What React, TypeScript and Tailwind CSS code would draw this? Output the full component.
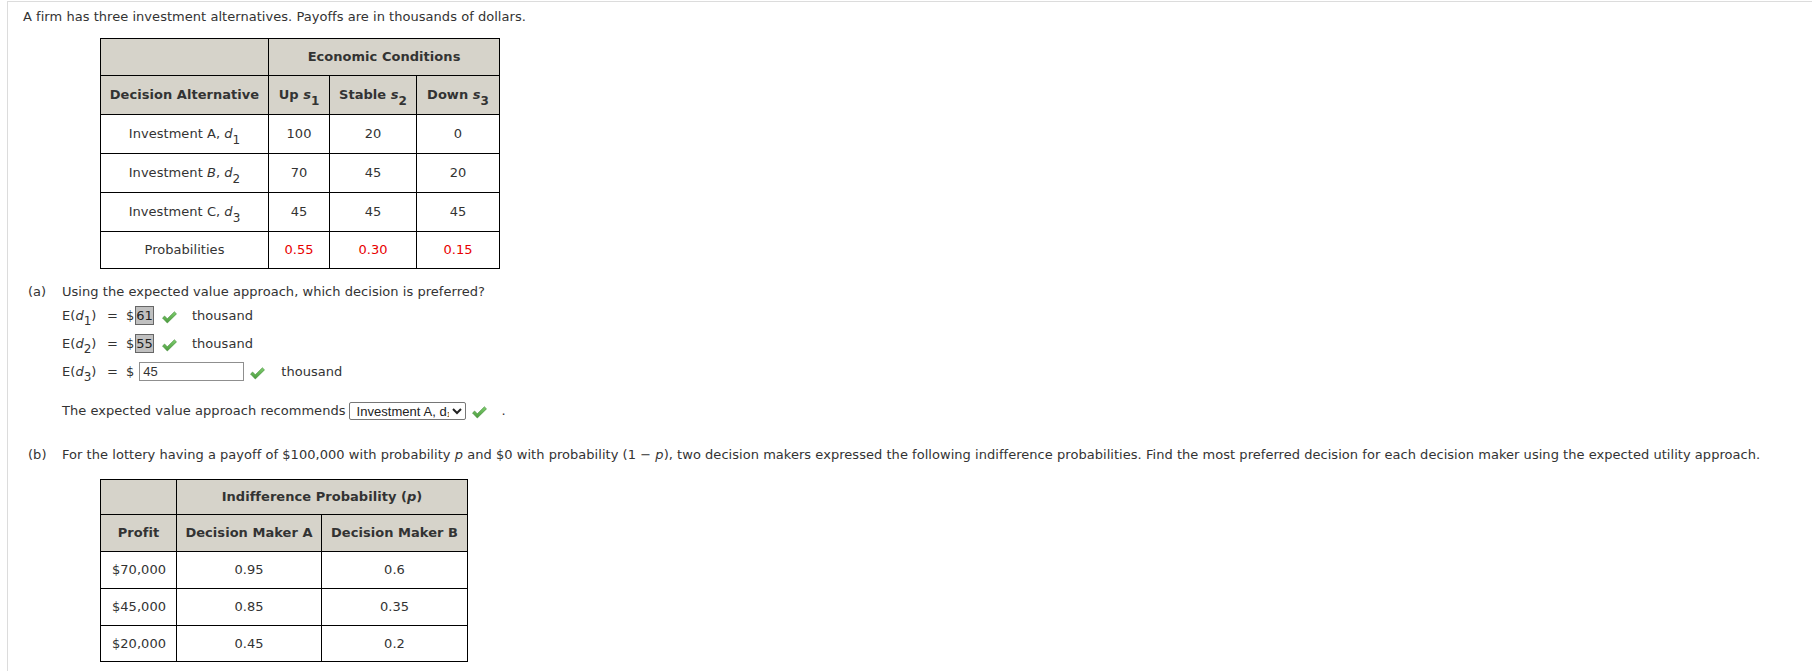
import React from "react";

const Check = ({ className = "" }: { className?: string }) => (
  <svg width="15" height="13" viewBox="0 0 15 13" className={className}>
    <defs>
      <linearGradient id="cg" x1="0" y1="0" x2="0" y2="1">
        <stop offset="0" stopColor="#7fcf6f" />
        <stop offset="1" stopColor="#4a9a3c" />
      </linearGradient>
    </defs>
    <polygon
      points="0.5,7 2.6,5 5.3,7.8 12.4,0.8 14.5,2.9 5.3,12"
      fill="url(#cg)"
      stroke="#3f8a35"
      strokeWidth="0.6"
      strokeLinejoin="round"
    />
  </svg>
);

const S = ({ n, italic = true }: { n: string; italic?: boolean }) => (
  <>
    <span className={italic ? "italic" : ""}>{n[0]}</span>
    <sub className="text-[12px] bottom-[-0.45em]">{n.slice(1)}</sub>
  </>
);

const hd = "bg-[#d6d3ca] border border-black font-bold text-center";
const td = "border border-black text-center";

export default function App() {
  return (
    <div className="min-h-[671px] bg-white font-['DejaVu_Sans',Verdana,sans-serif] text-[13px] tracking-[0.04px] text-[#333]">
      <div className="ml-[7px] mt-px border-l border-t border-[#dcdcdc] pl-[15px] pt-[7px] pb-[10px]">
        <div className="h-[16px] leading-[16px]">
          A firm has three investment alternatives. Payoffs are in thousands of dollars.
        </div>

        <table className="ml-[77px] mt-[13px] border-collapse table-fixed w-[399px]">
          <colgroup>
            <col className="w-[168px]" />
            <col className="w-[61px]" />
            <col className="w-[87px]" />
            <col className="w-[83px]" />
          </colgroup>
          <tbody>
            <tr className="h-[37px]">
              <td className={hd}></td>
              <td className={hd} colSpan={3}>
                Economic Conditions
              </td>
            </tr>
            <tr className="h-[39px]">
              <td className={hd}>Decision Alternative</td>
              <td className={hd}>
                Up <S n="s1" />
              </td>
              <td className={hd}>
                Stable <S n="s2" />
              </td>
              <td className={hd}>
                Down <S n="s3" />
              </td>
            </tr>
            <tr className="h-[39px]">
              <td className={td}>
                Investment A, <S n="d1" />
              </td>
              <td className={td}>100</td>
              <td className={td}>20</td>
              <td className={td}>0</td>
            </tr>
            <tr className="h-[39px]">
              <td className={td}>
                Investment <span className="italic">B</span>, <S n="d2" />
              </td>
              <td className={td}>70</td>
              <td className={td}>45</td>
              <td className={td}>20</td>
            </tr>
            <tr className="h-[39px]">
              <td className={td}>
                Investment C, <S n="d3" />
              </td>
              <td className={td}>45</td>
              <td className={td}>45</td>
              <td className={td}>45</td>
            </tr>
            <tr className="h-[37px]">
              <td className={td}>Probabilities</td>
              <td className={td + " text-[#e80000]"}>0.55</td>
              <td className={td + " text-[#e80000]"}>0.30</td>
              <td className={td + " text-[#e80000]"}>0.15</td>
            </tr>
          </tbody>
        </table>

        {/* Part (a) */}
        <div className="mt-[15px] flex pl-[5px]">
          <div className="w-[34px] h-[16px] leading-[16px]">(a)</div>
          <div className="flex flex-col">
            <div className="h-[16px] leading-[16px]">
              Using the expected value approach, which decision is preferred?
            </div>

            <div className="mt-[6px] flex h-[19px] items-center">
              <span className="w-[45px]">
                E(<S n="d1" />)
              </span>
              <span>=</span>
              <span className="ml-[8px]">$</span>
              <span className="ml-px inline-block h-[19px] border border-[#666] bg-[#c0c0c0] leading-[17px] text-[#222]">
                61
              </span>
              <Check className="ml-[8px] mt-[3px]" />
              <span className="ml-[15px]">thousand</span>
            </div>

            <div className="mt-[9px] flex h-[19px] items-center">
              <span className="w-[45px]">
                E(<S n="d2" />)
              </span>
              <span>=</span>
              <span className="ml-[8px]">$</span>
              <span className="ml-px inline-block h-[19px] border border-[#666] bg-[#c0c0c0] leading-[17px] text-[#222]">
                55
              </span>
              <Check className="ml-[8px] mt-[3px]" />
              <span className="ml-[15px]">thousand</span>
            </div>

            <div className="mt-[9px] flex h-[19px] items-center">
              <span className="w-[45px]">
                E(<S n="d3" />)
              </span>
              <span>=</span>
              <span className="ml-[8px]">$</span>
              <input
                readOnly
                defaultValue="45"
                className="ml-[5px] h-[19px] w-[105px] border border-[#8f8f8f] px-[3px] font-['Liberation_Sans',Arial,sans-serif] text-[13px] text-[#333] outline-none"
              />
              <Check className="ml-[6px] mt-[3px]" />
              <span className="ml-[16px]">thousand</span>
            </div>

            <div className="mt-[21px] flex h-[18px] items-center">
              <span>The expected value approach recommends</span>
              <select
                defaultValue="a"
                className="ml-[3px] h-[18px] w-[117px] rounded-[2px] border border-[#767676] bg-white pl-[3px] font-['Liberation_Sans',Arial,sans-serif] text-[13px] text-[#222]"
              >
                <option value="a">Investment A, d₁</option>
                <option value="b">Investment B, d₂</option>
                <option value="c">Investment C, d₃</option>
              </select>
              <Check className="ml-[6px] mt-[3px]" />
              <span className="ml-[15px]">.</span>
            </div>
          </div>
        </div>

        {/* Part (b) */}
        <div className="mt-[27px] flex pl-[5px]">
          <div className="w-[34px] h-[16px] leading-[16px]">(b)</div>
          <div className="h-[16px] leading-[16px] whitespace-nowrap">
            For the lottery having a payoff of $100,000 with probability{" "}
            <span className="italic">p</span> and $0 with probability (1 − <span className="italic">p</span>), two
            decision makers expressed the following indifference probabilities. Find the most preferred decision for
            each decision maker using the expected utility approach.
          </div>
        </div>

        <table className="ml-[77px] mt-[16px] border-collapse table-fixed w-[367px]">
          <colgroup>
            <col className="w-[76px]" />
            <col className="w-[145px]" />
            <col className="w-[146px]" />
          </colgroup>
          <tbody>
            <tr className="h-[35px]">
              <td className={hd}></td>
              <td className={hd} colSpan={2}>
                Indifference Probability (<span className="italic">p</span>)
              </td>
            </tr>
            <tr className="h-[37px]">
              <td className={hd}>Profit</td>
              <td className={hd}>Decision Maker A</td>
              <td className={hd}>Decision Maker B</td>
            </tr>
            <tr className="h-[37px]">
              <td className="border border-black pl-[11px]">$70,000</td>
              <td className={td}>0.95</td>
              <td className={td}>0.6</td>
            </tr>
            <tr className="h-[37px]">
              <td className="border border-black pl-[11px]">$45,000</td>
              <td className={td}>0.85</td>
              <td className={td}>0.35</td>
            </tr>
            <tr className="h-[36px]">
              <td className="border border-black pl-[11px]">$20,000</td>
              <td className={td}>0.45</td>
              <td className={td}>0.2</td>
            </tr>
          </tbody>
        </table>
      </div>
    </div>
  );
}
